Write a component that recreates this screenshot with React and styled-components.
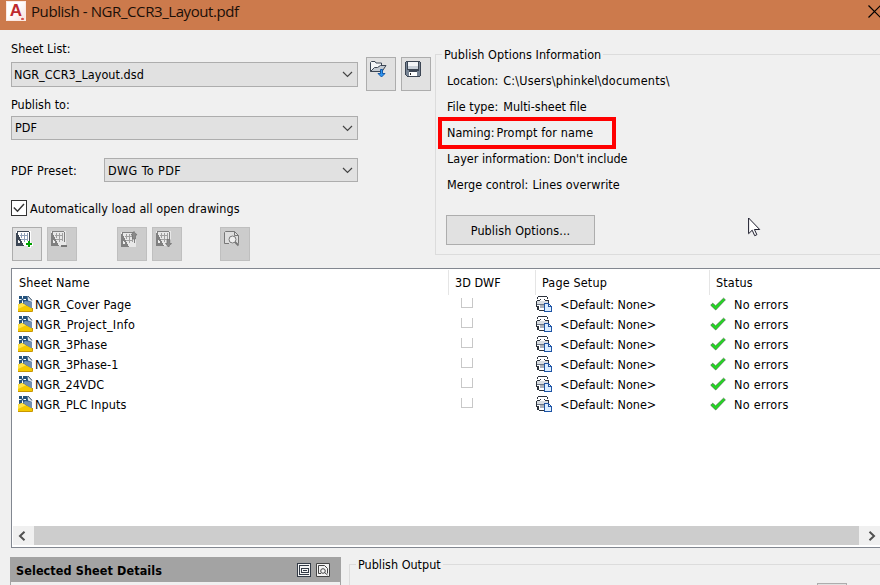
import React from 'react';
import styled, { createGlobalStyle } from 'styled-components';

const SHEETS = [
  { name: 'NGR_Cover Page', track: 0.15 },
  { name: 'NGR_Project_Info', track: 0.27 },
  { name: 'NGR_3Phase', track: 0.1 },
  { name: 'NGR_3Phase-1', track: 0.08 },
  { name: 'NGR_24VDC', track: 0 },
  { name: 'NGR_PLC Inputs', track: 0.1 },
];

const OPTIONS = [
  { label: 'Location:', value: 'C:\\Users\\phinkel\\documents\\', gap: 5, track: 0.18 },
  { label: 'File type:', value: 'Multi-sheet file', gap: 5 },
  { label: 'Naming:', value: 'Prompt for name', gap: 2, track: 0.13 },
  { label: 'Layer information:', value: "Don't include", gap: 3, track: -0.05 },
  { label: 'Merge control:', value: 'Lines overwrite', gap: 4, track: 0.08 },
];

const MARKED = 'Naming:';

const GlobalStyle = createGlobalStyle`
  * {
    box-sizing: border-box;
  }

  body {
    margin: 0;
    background: #f0f0f0;
    font-family: 'DejaVu Sans Condensed', 'DejaVu Sans', sans-serif;
    font-stretch: condensed;
    font-size: 12.5px;
    line-height: 16px;
    color: #000;
  }

  svg {
    display: block;
    flex-shrink: 0;
  }
`;

const Dialog = styled.div`
  width: 880px;
  height: 585px;
  overflow: hidden;
  background: #f0f0f0;
`;

const TitleBar = styled.div`
  display: flex;
  align-items: flex-start;
  height: 30px;
  padding-left: 6px;
  background: #cc7a4c;

  > svg {
    margin: 5px -1px 0 auto;
  }
`;

const Logo = styled.span`
  width: 20px;
  height: 20px;
  margin-top: 1px;
  background:
    radial-gradient(circle at 15.5px 17px, #d8504c 1px, transparent 1.6px),
    linear-gradient(135deg, #fff 40%, #f6e2dd);
  border: 1px solid #fbe9e4;
  color: #bf2a2e;
  font: bold 17px/17px 'Liberation Sans', sans-serif;
  text-align: center;
`;

const Title = styled.span`
  margin-left: 5px;
  font: 15px/22px 'Open Sans', sans-serif;
  letter-spacing: -0.42px;
  color: #1a0f08;
  white-space: nowrap;
`;

const Text = styled.span`
  letter-spacing: ${({ $track = 0 }) => $track}px;
  white-space: nowrap;
`;

const Top = styled.div`
  display: flex;
  height: 238px;
`;

const Settings = styled.div`
  width: 435px;
  padding: 10px 4px 0 11px;
`;

const SheetListRow = styled.div`
  display: flex;
  align-items: flex-end;
  gap: 5px;
  height: 51px;

  > :nth-child(2) {
    margin-left: 3px;
  }
`;

const Field = styled.div`
  width: 347px;
  padding-bottom: 4px;
`;

const Label = styled.div`
  height: ${({ $height }) => $height}px;
  padding-top: 1px;
  white-space: nowrap;
`;

const Select = styled.div`
  display: flex;
  flex: 1;
  align-items: center;
  justify-content: space-between;
  height: ${({ $height }) => $height}px;
  padding: 0 4px 0 ${({ $pad }) => $pad}px;
  border: 1px solid #adadad;
  background: #e1e1e1;
`;

const ToolButton = styled.div`
  width: 30px;
  height: 34px;
  margin-left: ${({ $space = 0 }) => $space}px;
  padding: 3px;
  border: 1px solid ${({ $off }) => ($off ? '#bfbfbf' : '#adadad')};
  background: ${({ $off }) => ($off ? '#cccccc' : '#e1e1e1')};
`;

const PublishTo = styled.div`
  width: 347px;
  margin-top: 5px;
`;

const PresetRow = styled.div`
  display: flex;
  align-items: center;
  width: 347px;
  margin-top: 18px;

  ${Select} ${Text} {
    padding-top: 1px;
  }
`;

const PresetLabel = styled.span`
  width: 93px;
  padding-top: 2px;
  letter-spacing: 0.15px;
  white-space: nowrap;
`;

const CheckRow = styled.div`
  display: flex;
  align-items: center;
  gap: 3px;
  height: 16px;
  margin-top: 18px;

  ${Text} {
    padding-top: 2px;
  }
`;

const CheckBox = styled.div`
  display: flex;
  align-items: center;
  justify-content: center;
  width: 16px;
  height: 16px;
  border: 1px solid #333;
  background: #fff;
`;

const Tools = styled.div`
  display: flex;
  gap: 5px;
  margin: 11px 0 0 1px;
`;

const Group = styled.div`
  position: relative;
  flex: none;
  width: 446px;
  height: 201px;
  margin-top: 24px;
  border: 1px solid #dcdcdc;
`;

const Legend = styled.span`
  display: block;
  width: max-content;
  margin: -8px 0 0 6px;
  padding: 0 2px;
  background: #f0f0f0;
  letter-spacing: ${({ $track = 0 }) => $track}px;
  white-space: nowrap;
`;

const Options = styled.div`
  display: flex;
  flex-direction: column;
  gap: 10px;
  margin: 10px 0 0 11px;
`;

const Option = styled.div`
  display: flex;
  gap: ${({ $gap }) => $gap}px;
  position: relative;
`;

const Mark = styled.span`
  position: absolute;
  top: -8px;
  left: -9px;
  width: 178px;
  height: 32px;
  border: 4px solid #f00;
`;

const Button = styled.div`
  width: 149px;
  height: 30px;
  margin: 22px 0 0 10px;
  border: 1px solid #adadad;
  background: #e1e1e1;
  letter-spacing: 0.1px;
  line-height: 29px;
  text-align: center;
`;

const Pointer = styled.span`
  position: absolute;
  top: 162px;
  left: 312px;
`;

const List = styled.div`
  display: flex;
  flex-direction: column;
  width: 871px;
  height: 280px;
  margin-left: 11px;
  padding: 1px 1px 2px;
  border: 1px solid #828790;
  background: #fff;
`;

const ListHeader = styled.div`
  display: grid;
  grid-template-columns: 436px 87px 174px 1fr;
  height: 24px;
`;

const HeaderCell = styled.div`
  padding: 1px 0 0 6px;
  border-right: 1px solid #e5e5e5;
  letter-spacing: 0.15px;
  line-height: 24px;
  white-space: nowrap;

  &:nth-child(2) {
    letter-spacing: 0;
  }

  &:last-child {
    border-right: none;
  }
`;

const Row = styled.div`
  display: grid;
  grid-template-columns: 436px 87px 174px 1fr;
  height: 20px;
`;

const Cell = styled.div`
  display: flex;
  align-items: center;
  gap: ${({ $gap = 0 }) => $gap}px;
  padding-left: ${({ $pad = 0 }) => $pad}px;

  ${Text} {
    padding-top: 2px;
  }
`;

const EmptyBox = styled.span`
  width: 12px;
  height: 10px;
  margin-bottom: 2px;
  border: 1px solid #c8c8c8;
  border-top: none;
`;

const ScrollBar = styled.div`
  display: flex;
  height: 19px;
  margin-top: auto;
  background: #f0f0f0;
`;

const ScrollButton = styled.div`
  display: flex;
  align-items: center;
  justify-content: ${({ $end }) => ($end ? 'flex-end' : 'center')};
  width: 21px;
  padding-right: ${({ $end }) => ($end ? 4 : 3)}px;
`;

const Thumb = styled.div`
  width: 825px;
  background: #cdcdcd;
`;

const Bottom = styled.div`
  display: flex;
  gap: 8px;
  padding: 9px 0 0 10px;
`;

const Details = styled.div`
  flex: none;
  width: 331px;
  height: 40px;
  border: 1px solid #a3a3a3;
`;

const DetailsHeader = styled.div`
  display: flex;
  align-items: center;
  gap: 5px;
  height: 24px;
  padding: 0 10px 0 5px;
  background: #a3a3a3;
`;

const DetailsTitle = styled.span`
  margin-right: auto;
  padding-top: 1px;
  font-weight: bold;
  letter-spacing: 0.1px;
  white-space: nowrap;
`;

const Output = styled.div`
  flex: none;
  width: 540px;
  height: 40px;
  margin-top: 7px;
  border: 1px solid #dcdcdc;
`;

const OutputButton = styled.div`
  width: 30px;
  height: 20px;
  margin: 10px 0 0 467px;
  border: 1px solid #adadad;
  background: #e1e1e1;
`;

const Chevron = () => (
  <svg width="11" height="7" viewBox="0 0 11 7" fill="none" stroke="#444" strokeWidth="1.2">
    <path d="M1 1l4.5 4.5L10 1" />
  </svg>
);

const OpenIcon = () => (
  <svg width="18" height="17" viewBox="0 0 18 17">
    <path d="M.5 10.5v-9l1-1h3.5l1 1.5h5.5v3" fill="#f4f6f8" stroke="#3c4654" />
    <path d="M.5 10.5l4-4h3l3-2h5.5l-4 6z" fill="#c3cad2" stroke="#3c4654" />
    <path d="M10.5 8.5h2v4H15L11.500 16 8 12.500h2.500z" fill="#2f95f0" stroke="#0a4fa0" strokeWidth=".9" />
  </svg>
);

const SaveIcon = () => (
  <svg width="16" height="16" viewBox="0 0 16 16" shapeRendering="crispEdges">
    <path d="M1 0h14v1h1v14h-1v1H2v-1H1v-1H0V1h1z" fill="#3c4654" />
    <path d="M1 1h1v13H1zM14 1h1v14h-1zM2 9h2v6H2zM12 10h2v5h-2z" fill="#778494" />
    <path d="M3 1h10v7H3z" fill="#f2f5f8" />
    <path d="M3 5h10v3H3z" fill="#c9d1da" />
    <path d="M4 11h8v4H4z" fill="#fff" />
    <path d="M5 12h1v2H5z" fill="#222" />
  </svg>
);

// drawing sheet with the set square, shared by the add/remove/move buttons
const Sheet = ({ dark }) => {
  const ink = dark ? '#3c4654' : '#808080';
  return (
    <g shapeRendering="crispEdges">
      <path d="M0 0h15v15H0z" fill={dark ? '#fff' : '#e8e8e8'} />
      <path d="M1 0h12v1H1zM13 1h1v10h-1zM1 1h1v2H1z" fill={ink} />
      <path d="M4 4h8v1H4zM5 8h7v1H5zM5 2h1v5H5zM8 2h1v9H8zM11 2h1v8h-1z" fill={dark ? '#8fa0b8' : '#a0a0a0'} />
      <path d="M0 2h1v1h1v1h1v2h1v2h1v2h1v2h1v2h1v1H0z" fill={ink} />
      <path d="M2 9h1v1h1v2H2z" fill="#eee" />
    </g>
  );
};

const AddIcon = () => (
  <svg width="17" height="17" viewBox="0 0 17 17">
    <Sheet dark />
    <path d="M12 10h3v2h2v3h-2v2h-3v-2h-2v-3h2z" fill="#fff" />
    <path d="M12 10h2v2h2v2h-2v2h-2v-2h-2v-2h2z" fill="#00a000" shapeRendering="crispEdges" />
  </svg>
);

const RemoveIcon = () => (
  <svg width="17" height="17" viewBox="0 0 17 17">
    <Sheet />
    <path d="M10 14h6v2h-6z" fill="#777" />
  </svg>
);

const MoveIcon = ({ up }) => (
  <svg width="18" height="17" viewBox="0 0 18 17">
    {up ? <g transform="translate(0 1)"><Sheet /></g> : <Sheet />}
    <path
      d={up ? 'M13 .5l3 3.5h-1.5v4h-3V4H10z' : 'M11 8.500h3v4h1.500l-3 3.500-3-3.500H11z'}
      fill="#8a8a8a"
      stroke="#747474"
      strokeWidth=".8"
    />
  </svg>
);

const PreviewIcon = () => (
  <svg width="16" height="16" viewBox="0 0 16 16" fill="none" stroke="#777">
    <path d="M5 12.5H.5v-11l1-1h9l4 4v8H14" fill="#dedede" />
    <path d="M10.5.5v4h4" />
    <circle cx="8.5" cy="8.5" r="3.5" fill="#eee" />
    <path d="M11 11l3.5 3.5" strokeWidth="1.8" />
  </svg>
);

const DwgIcon = () => (
  <svg width="15" height="16" viewBox="0 0 15 16">
    <path d="M1 0h9l4 4v11H1z" fill="#24527d" />
    <path d="M7 5l7 1v7L5 7z" fill="#6f8fb3" />
    <path d="M9.5 0L14 4.500V6l-4-1.500z" fill="#e3eaf2" />
    <path d="M10 0l4 4.5" stroke="#2b3b4c" strokeWidth=".7" />
    <path d="M0 8.500L4 7l10 5.500V16H0z" fill="#f3c900" />
    <path d="M0 8.500L4 7l4 2.200L0 13z" fill="#ffe24a" />
    <path d="M0 15.500h14.500V12" stroke="#c99700" fill="none" />
    <path d="M1 3.500h2.500M5.500 3.500H8M4.500 0v2.500M4.500 4.500V7" stroke="#fff" />
  </svg>
);

const PrinterIcon = () => (
  <svg width="17" height="16" viewBox="0 0 17 16" shapeRendering="crispEdges">
    <path d="M2 0h9v1h1v2h1v5h1v4H0V7h1V3h1z" fill="#fff" />
    <path d="M2 0h9v1H2zM1 1h1v2H1zM11 1h1v2h-1zM1 4h3v1H1zM9 4h4v1H9zM4 3h1v1H4zM8 3h1v1H8z" fill="#2b313b" />
    <path d="M0 5h1v6H0zM12 5h1v2h-1z" fill="#2b313b" />
    <path d="M1 5h11v3H1z" fill="#d8dde2" />
    <path d="M1 8h8v1H1z" fill="#687485" />
    <path d="M1 10h2v4H1zM3 14h5v1H3z" fill="#2b313b" />
    <path d="M4 9h4v3H4z" fill="#a8b0ba" />
    <path d="M8 7h5v1h1v1h1v1h1v6H8z" fill="#1f55a5" />
    <path d="M9 8h3v3h3v4H9z" fill="#dceeff" />
    <path d="M13 9h1v1h-1z" fill="#fff" />
  </svg>
);

const OkIcon = () => (
  <svg width="16" height="14" viewBox="0 0 16 14">
    <path d="M.7 8.200l2-2 2.900 2.600L13.500 1.200l1.900 1.600L5.700 13z" fill="#22d822" stroke="#3f6b3f" strokeWidth=".7" />
  </svg>
);

const Cursor = () => (
  <svg width="13" height="20" viewBox="0 0 13 20">
    <path d="M.6 1v15.700l3.600-3.500 2.500 5.500 2.200-1-2.500-5.200h5.300z" fill="#fff" stroke="#1c1c2c" />
  </svg>
);

const Arrow = ({ right }) => (
  <svg width="8" height="10" viewBox="0 0 8 10" fill="none" stroke="#505050" strokeWidth="2">
    <path d={right ? 'M1.500.8L6 5 1.500 9.200' : 'M6.500.8L2 5l4.500 4.200'} />
  </svg>
);

const DetailsIcon = () => (
  <svg width="14" height="14" viewBox="0 0 14 14" fill="none" stroke="#333b46" shapeRendering="crispEdges">
    <path d="M.5.5h13v13H.5z" fill="#f4f4f4" />
    <path d="M12 2.500H2.500v9H12M4.500 5.500h7v4h-7zM6 7.500h4" />
  </svg>
);

const DetailsPreviewIcon = () => (
  <svg width="14" height="14" viewBox="0 0 14 14" fill="none" stroke="#444">
    <path d="M.5.5h13v13H.5z" fill="#f4f4f4" />
    <path d="M5 10.500H2.500v-8h6l3 3v5" />
    <circle cx="7" cy="8" r="2.300" />
    <path d="M8.500 9.500l3 2.500" />
  </svg>
);

const App = () => (
  <>
    <GlobalStyle />
    <Dialog>
      <TitleBar>
        <Logo>A</Logo>
        <Title>Publish - NGR_CCR3_Layout.pdf</Title>
        <svg width="13" height="13" viewBox="0 0 13 13" stroke="#000" strokeWidth="1.2">
          <path d="M.5.5l12 12M12.500.5l-12 12" />
        </svg>
      </TitleBar>

      <Top>
        <Settings>
          <SheetListRow>
            <Field>
              <Label $height={22}>Sheet List:</Label>
              <Select $height={25} $pad={2}>
                <Text $track={0.06}>NGR_CCR3_Layout.dsd</Text>
                <Chevron />
              </Select>
            </Field>
            <ToolButton><OpenIcon /></ToolButton>
            <ToolButton><SaveIcon /></ToolButton>
          </SheetListRow>

          <PublishTo>
            <Label $height={20}>Publish to:</Label>
            <Select $height={24} $pad={3}>
              <Text>PDF</Text>
              <Chevron />
            </Select>
          </PublishTo>

          <PresetRow>
            <PresetLabel>PDF Preset:</PresetLabel>
            <Select $height={24} $pad={3}>
              <Text $track={0.4}>DWG To PDF</Text>
              <Chevron />
            </Select>
          </PresetRow>

          <CheckRow>
            <CheckBox>
              <svg width="12" height="10" viewBox="0 0 12 10" fill="none" stroke="#333" strokeWidth="1.4">
                <path d="M.8 4.500l3.700 3.800L11 1" />
              </svg>
            </CheckBox>
            <Text $track={0.04}>Automatically load all open drawings</Text>
          </CheckRow>

          <Tools>
            <ToolButton><AddIcon /></ToolButton>
            <ToolButton $off><RemoveIcon /></ToolButton>
            <ToolButton $off $space={35}><MoveIcon up /></ToolButton>
            <ToolButton $off><MoveIcon /></ToolButton>
            <ToolButton $off $space={33}><PreviewIcon /></ToolButton>
          </Tools>
        </Settings>

        <Group>
          <Legend $track={0.06}>Publish Options Information</Legend>
          <Options>
            {OPTIONS.map((option) => (
              <Option key={option.label} $gap={option.gap}>
                <Text>{option.label}</Text>
                <Text $track={option.track}>{option.value}</Text>
                {option.label === MARKED && <Mark />}
              </Option>
            ))}
          </Options>
          <Button>Publish Options...</Button>
          <Pointer><Cursor /></Pointer>
        </Group>
      </Top>

      <List>
        <ListHeader>
          <HeaderCell>Sheet Name</HeaderCell>
          <HeaderCell>3D DWF</HeaderCell>
          <HeaderCell>Page Setup</HeaderCell>
          <HeaderCell>Status</HeaderCell>
        </ListHeader>
        {SHEETS.map((sheet) => (
          <Row key={sheet.name}>
            <Cell $pad={5} $gap={2}>
              <DwgIcon />
              <Text $track={sheet.track}>{sheet.name}</Text>
            </Cell>
            <Cell $pad={12}><EmptyBox /></Cell>
            <Cell $gap={7}>
              <PrinterIcon />
              <Text $track={-0.03}>&lt;Default: None&gt;</Text>
            </Cell>
            <Cell $gap={8}>
              <OkIcon />
              <Text $track={0.3}>No errors</Text>
            </Cell>
          </Row>
        ))}
        <ScrollBar>
          <ScrollButton><Arrow /></ScrollButton>
          <Thumb />
          <ScrollButton $end><Arrow right /></ScrollButton>
        </ScrollBar>
      </List>

      <Bottom>
        <Details>
          <DetailsHeader>
            <DetailsTitle>Selected Sheet Details</DetailsTitle>
            <DetailsIcon />
            <DetailsPreviewIcon />
          </DetailsHeader>
        </Details>
        <Output>
          <Legend>Publish Output</Legend>
          <OutputButton />
        </Output>
      </Bottom>
    </Dialog>
  </>
);

export default App;
